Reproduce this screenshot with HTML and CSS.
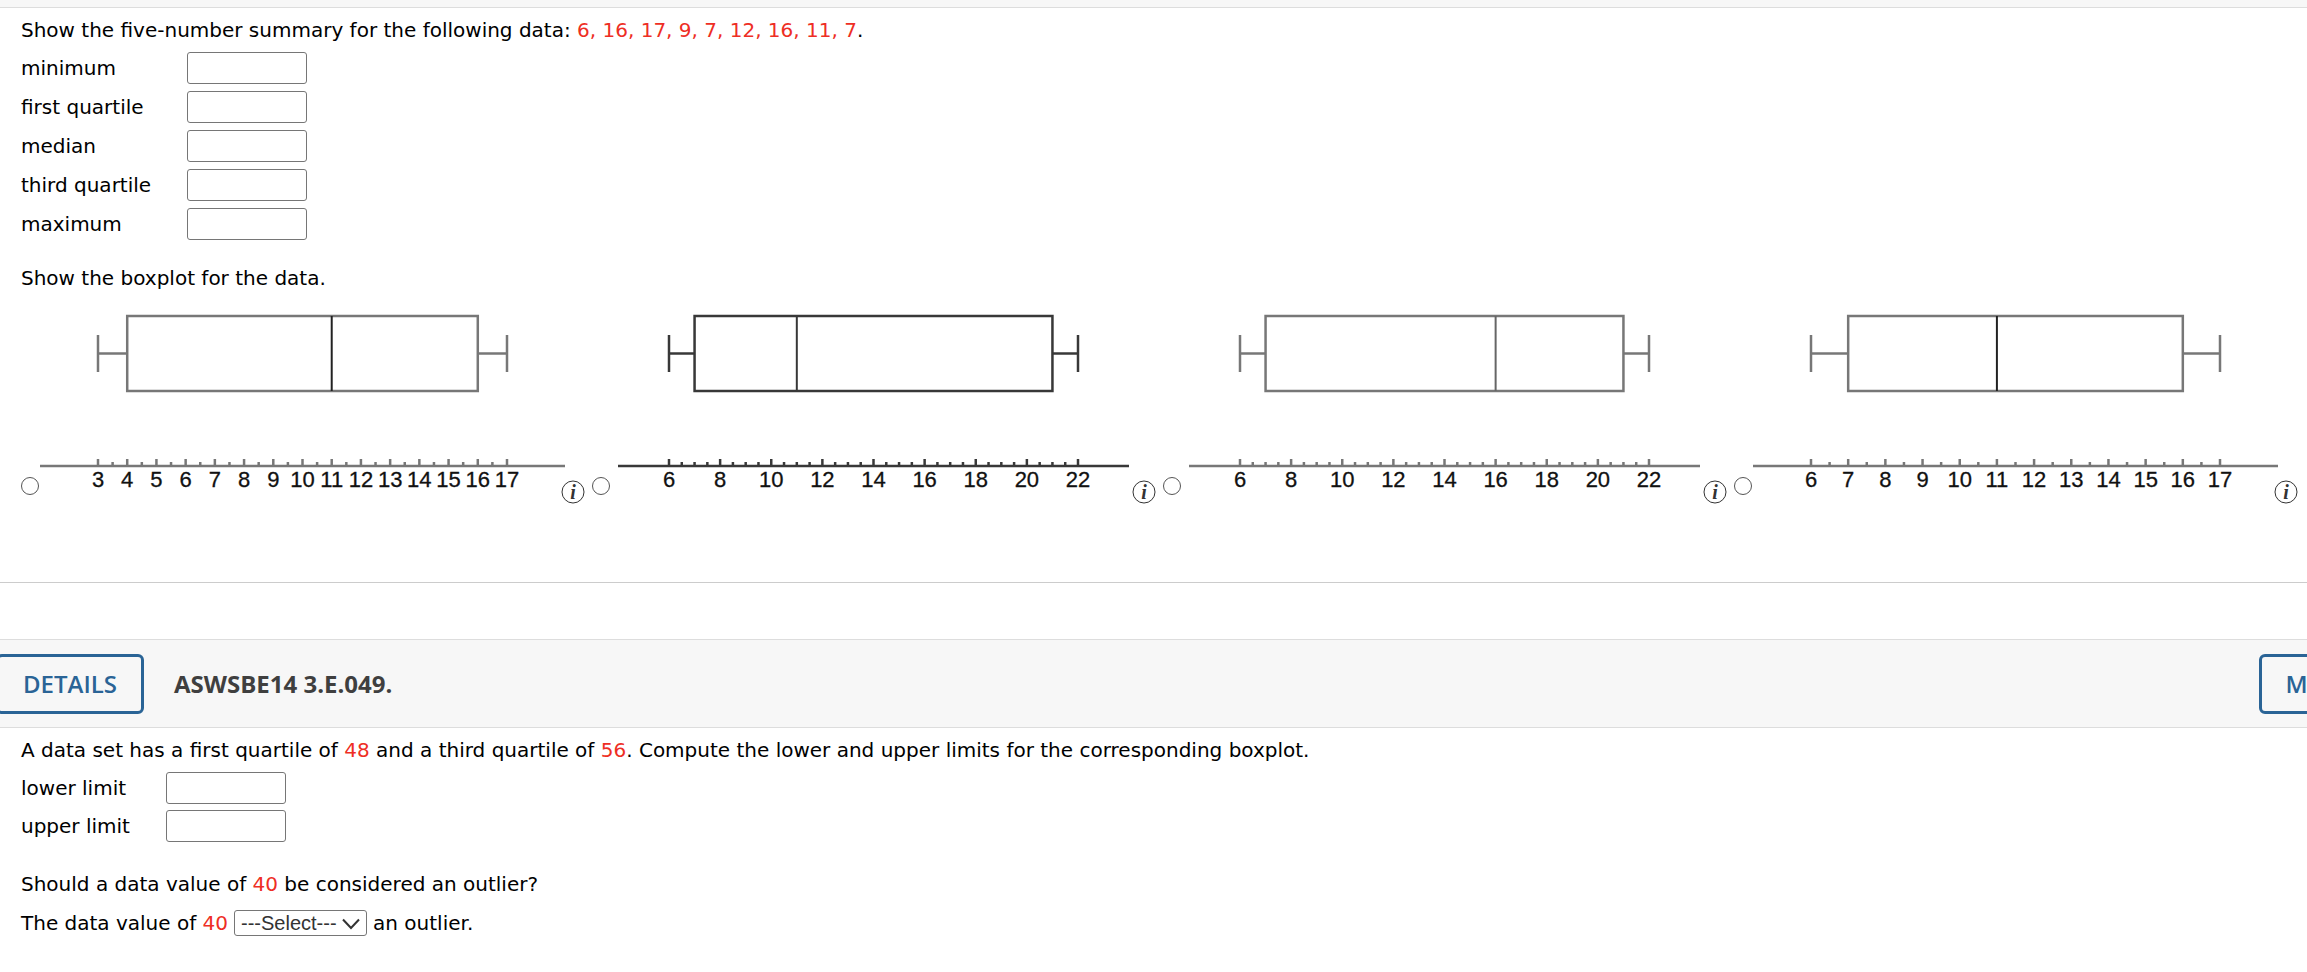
FILE: index.html
```html
<!DOCTYPE html>
<html lang="en">
<head>
    <meta charset="UTF-8">
    <title>Five-Number Summary</title>
    <link rel="stylesheet" href="styles.css">
</head>
<body>
    <div class="header-end"></div>

    <section class="question question-summary">
        <p>Show the five-number summary for the following data: <span class="rand">6, 16, 17, 9, 7, 12, 16, 11, 7</span>.</p>
        <div class="fields">
            <label for="minimum">minimum</label>
            <input type="text" id="minimum">
            <label for="q1">first quartile</label>
            <input type="text" id="q1">
            <label for="median">median</label>
            <input type="text" id="median">
            <label for="q3">third quartile</label>
            <input type="text" id="q3">
            <label for="maximum">maximum</label>
            <input type="text" id="maximum">
        </div>
        <p>Show the boxplot for the data.</p>
        <div class="options" id="options">
            <!-- Boxplot choices are added by script.js -->
        </div>
    </section>

    <header class="question-header">
        <button type="button" class="header-btn">DETAILS</button>
        <h2>ASWSBE14 3.E.049.</h2>
        <button type="button" class="header-btn notes-btn">MY NOTES</button>
    </header>

    <section class="question">
        <p>A data set has a first quartile of <span class="rand">48</span> and a third quartile of <span class="rand">56</span>. Compute the lower and upper limits for the corresponding boxplot.</p>
        <div class="fields fields-limits">
            <label for="lower">lower limit</label>
            <input type="text" id="lower">
            <label for="upper">upper limit</label>
            <input type="text" id="upper">
        </div>
        <p>Should a data value of <span class="rand">40</span> be considered an outlier?</p>
        <p class="answer-line">
            <label for="outlier">The data value of <span class="rand">40</span></label>
            <span class="select-wrap">
                <select id="outlier">
                    <option>---Select---</option>
                    <option>is</option>
                    <option>is not</option>
                </select>
                <svg class="chevron" viewBox="0 0 18 12" aria-hidden="true"><path d="M1 1.5 L9 10 L17 1.5"/></svg>
            </span>
            <span>an outlier.</span>
        </p>
    </section>

    <script src="script.js"></script>
</body>
</html>
```

FILE: styles.css
```css
* {
    box-sizing: border-box;
}
body {
    margin: 0;
    background-color: white;
    color: black;
    font-family: Verdana, "DejaVu Sans", sans-serif;
    font-size: 20px;
    line-height: 24px;
    overflow-x: hidden;
}
p {
    margin: 0;
}
.header-end {
    height: 8px;
    background-color: #f7f7f7;
    border-bottom: 1px solid #ddd;
}
.question {
    padding: 10px 2px 32px 21px;
}
.question-summary {
    padding-bottom: 78px;
    border-bottom: 1px solid #ccc;
}
.rand {
    color: #ee2e24;
}

/* label / text box pairs */
.fields {
    display: grid;
    grid-template-columns: 166px 120px;
    row-gap: 7px;
    align-items: center;
    margin: 10px 0 26px;
}
.fields-limits {
    grid-template-columns: 145px 120px;
    row-gap: 6px;
    margin-bottom: 30px;
}
.fields input {
    height: 32px;
    border: 1px solid #767676;
    border-radius: 3px;
    padding: 2px 4px;
    font-size: 20px;
}

/* boxplot choices */
.options {
    display: grid;
    grid-template-columns: repeat(4, 1fr);
    margin-top: 10px;
}
.option {
    display: flex;
    align-items: flex-end;
}
.option input {
    appearance: none;
    flex: none;
    width: 18px;
    height: 18px;
    margin: 0 1px 9px 0;
    border: 1px solid #555;
    border-radius: 50%;
    background-color: white;
}
.option input:checked {
    border: 5px solid #0075ff;
}
.plot {
    flex: 0 1 525px;
    min-width: 0;
    height: auto;
    overflow: visible;
}
.plot line,
.plot rect {
    fill: none;
    stroke: #777;
    stroke-width: 2.5;
}
.plot .median {
    stroke: #222;
    stroke-width: 2;
}
.plot text {
    font-family: Arial, "Liberation Sans", sans-serif;
    font-size: 22px;
    text-anchor: middle;
    fill: #111;
    stroke: #111;
    stroke-width: 0.3;
}
.plot.dark line,
.plot.dark rect {
    stroke: #383838;
}
.plot.light .median {
    stroke: #666;
}
.info-btn {
    flex: none;
    width: 24px;
    height: 24px;
    margin-left: -4px;
    padding: 0;
    border: none;
    background: none;
}
.info-btn svg {
    display: block;
}
.info-btn circle {
    fill: white;
    stroke: #333;
}
.info-btn text {
    font: italic bold 20px "Liberation Serif", serif;
    text-anchor: middle;
    fill: #333;
}

/* question title bar */
.question-header {
    display: flex;
    align-items: center;
    height: 89px;
    margin-top: 56px;
    background-color: #f7f7f7;
    border-top: 1px solid #ddd;
    border-bottom: 1px solid #ddd;
    overflow: hidden;
}
.question-header h2 {
    margin: 0 auto 0 30px;
    font-family: "Open Sans", sans-serif;
    font-size: 24px;
    font-weight: 700;
    color: #3f3f3f;
}
.header-btn {
    flex: none;
    height: 60px;
    margin-left: -4px;
    padding: 0 24px;
    border: 3px solid #2a6496;
    border-radius: 6px;
    background-color: transparent;
    color: #2a6496;
    font-family: "Open Sans", sans-serif;
    font-size: 24px;
    font-weight: 600;
}
.notes-btn {
    margin-right: -126px;
}

.answer-line {
    display: flex;
    align-items: center;
    gap: 6px;
    margin-top: 14px;
}
.select-wrap {
    position: relative;
}
.select-wrap select {
    display: block;
    appearance: none;
    width: 133px;
    height: 26px;
    padding: 0 6px;
    border: 1px solid #767676;
    border-radius: 3px;
    background-color: white;
    color: #333;
    font-family: Arial, "Liberation Sans", sans-serif;
    font-size: 20px;
}
.chevron {
    position: absolute;
    right: 7px;
    top: 8px;
    width: 18px;
    height: 12px;
    fill: none;
    stroke: #333;
    stroke-width: 2;
    pointer-events: none;
}
```

FILE: script.js
```js
// min, q1, median, q3, max plus axis settings for each choice
const plots = [
    { values: [3, 4, 11, 16, 17], step: 1, axis: [0, 525], style: '' },
    { values: [6, 7, 11, 21, 22], step: 2, axis: [7, 518], style: 'dark' },
    { values: [6, 7, 16, 21, 22], step: 2, axis: [7, 518], style: 'light' },
    { values: [6, 7, 11, 16, 17], step: 1, axis: [0, 525], style: '' }
];

function line(x1, y1, x2, y2, cls = '') {
    return `<line class="${cls}" x1="${x1}" y1="${y1}" x2="${x2}" y2="${y2}"/>`;
}

function drawPlot(plot) {
    const [min, q1, median, q3, max] = plot.values;
    const scale = v => 58 + (v - min) * 409 / (max - min);
    let svg = '';

    // box and whiskers
    svg += `<rect x="${scale(q1)}" y="16" width="${scale(q3) - scale(q1)}" height="75"/>`;
    svg += line(scale(median), 16, scale(median), 91, 'median');
    svg += line(scale(min), 35, scale(min), 72);
    svg += line(scale(max), 35, scale(max), 72);
    svg += line(scale(min), 53.5, scale(q1), 53.5);
    svg += line(scale(q3), 53.5, scale(max), 53.5);

    // number line
    svg += line(plot.axis[0], 166, plot.axis[1], 166);
    for (let v = min; v <= max; v += 0.5) {
        const major = (v - min) % plot.step === 0;
        svg += line(scale(v), major ? 159 : 162, scale(v), 166);
        if (major) {
            svg += `<text x="${scale(v)}" y="187">${v}</text>`;
        }
    }
    return `<svg class="plot ${plot.style}" viewBox="0 0 525 204" role="img" aria-label="Boxplot ${plot.values.join(', ')}">${svg}</svg>`;
}

const options = document.getElementById('options');
plots.forEach((plot, index) => {
    const option = document.createElement('div');
    option.className = 'option';
    option.innerHTML = `
        <input type="radio" name="boxplot" id="plot${index}" aria-label="Boxplot ${index + 1}">
        ${drawPlot(plot)}
        <button type="button" class="info-btn" aria-label="Plot description">
            <svg width="24" height="24" viewBox="0 0 24 24"><circle cx="12" cy="12" r="11"/><text x="12" y="19">i</text></svg>
        </button>`;
    options.appendChild(option);
});
```
